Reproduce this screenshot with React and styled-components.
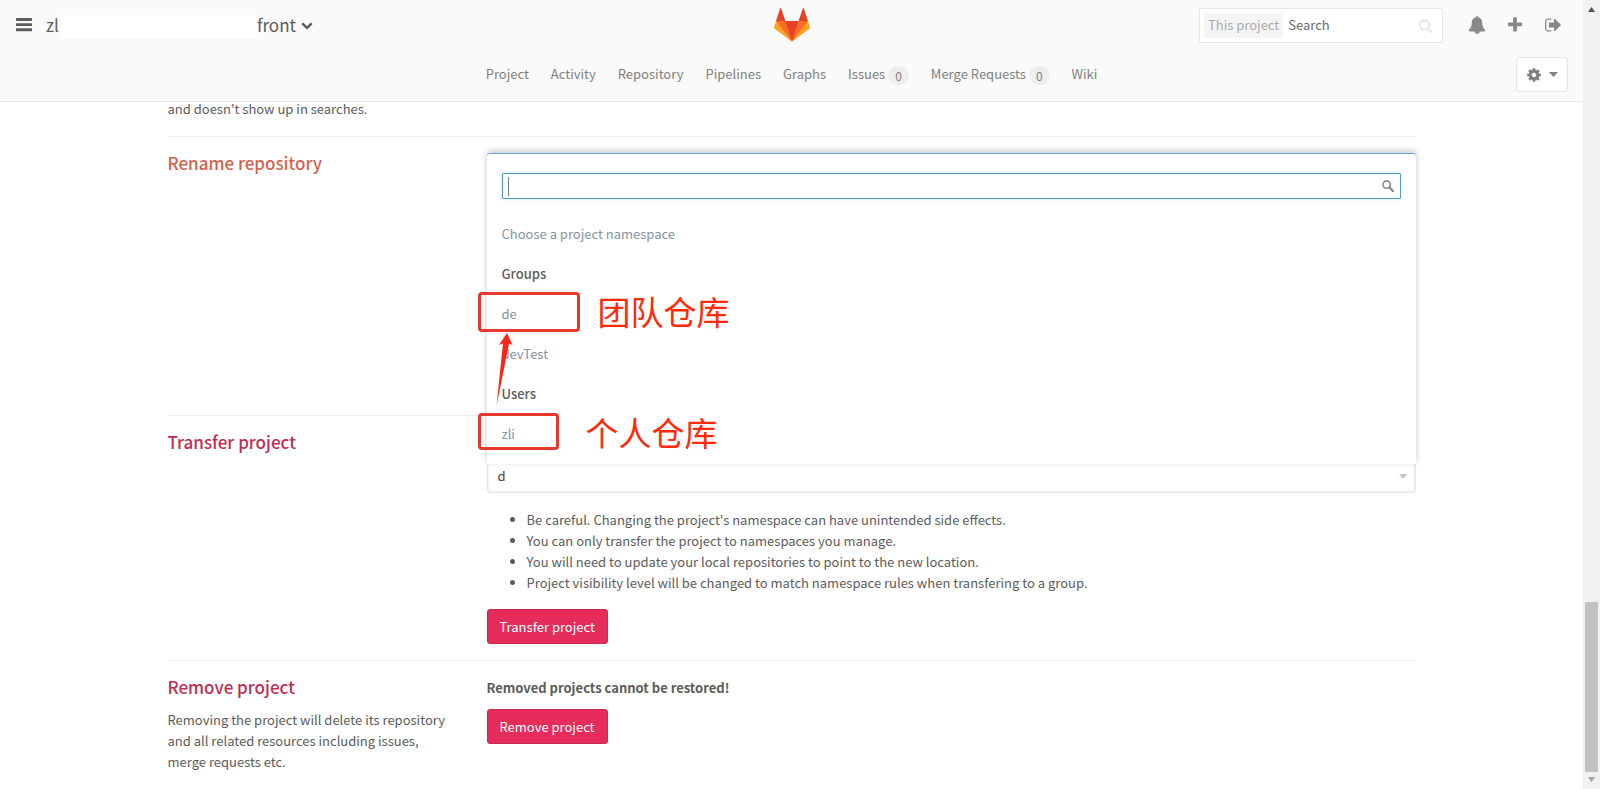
import React from "react";
import styled, { createGlobalStyle } from "styled-components";

const GlobalStyle = createGlobalStyle`
  *, *::before, *::after { box-sizing: border-box; }
  body {
    margin: 0;
    background: #fff;
    color: #5c5c5c;
    font-family: "Noto Sans CJK SC", "Open Sans", sans-serif;
    font-size: 13px;
    line-height: 21px;
  }
  button, input { font: inherit; color: inherit; }
  a { color: inherit; text-decoration: none; }
`;

/* ---------- icons ---------- */

const ICONS = {
  menu: "M64 112h1664q64 0 64 64v200q0 64-64 64h-1664q-64 0-64-64v-200q0-64 64-64zM64 692h1664q64 0 64 64v200q0 64-64 64h-1664q-64 0-64-64v-200q0-64 64-64zM64 1272h1664q64 0 64 64v200q0 64-64 64h-1664q-64 0-64-64v-200q0-64 64-64z",
  chevron:
    "M1683 808l-742 741q-19 19-45 19t-45-19l-742-741q-19-19-19-45.500t19-45.500l166-165q19-19 45-19t45 19l531 531 531-531q19-19 45-19t45 19l166 165q19 19 19 45.500t-19 45.500z",
  search:
    "M1216 832q0-185-131.500-316.500t-316.500-131.500-316.500 131.500-131.500 316.500 131.500 316.500 316.500 131.500 316.500-131.500 131.500-316.500zm512 832q0 52-38 90t-90 38q-54 0-90-38l-343-342q-179 124-399 124-143 0-273.500-55.500t-225-150-150-225-55.500-273.500 55.500-273.500 150-225 225-150 273.500-55.500 273.500 55.500 225 150 150 225 55.500 273.500q0 220-124 399l343 343q37 37 37 90z",
  bell: "M912 1696q0-16-16-16-59 0-101.500-42.500t-42.500-101.500q0-16-16-16t-16 16q0 73 51.500 124.500t124.500 51.500q16 0 16-16zm816-288q0 52-38 90t-90 38h-448q0 106-75 181t-181 75-181-75-75-181h-448q-52 0-90-38t-38-90q50-42 91-88t85-119.500 74.500-158.500 50-206 19.500-260q0-152 117-282.500t307-158.500q-8-19-8-39 0-40 28-68t68-28 68 28 28 68q0 20-8 39 190 28 307 158.500t117 282.500q0 139 19.500 260t50 206 74.500 158.500 85 119.500 91 88z",
  plus: "M1600 736v192q0 40-28 68t-68 28h-416v416q0 40-28 68t-68 28h-192q-40 0-68-28t-28-68v-416h-416q-40 0-68-28t-28-68v-192q0-40 28-68t68-28h416v-416q0-40 28-68t68-28h192q40 0 68 28t28 68v416h416q40 0 68 28t28 68z",
  signOut:
    "M640 1440q0 4 1 20t.5 26.500-3 23.500-10 19.500-20.500 6.500h-320q-119 0-203.500-84.500t-84.500-203.500v-704q0-119 84.500-203.500t203.500-84.500h320q13 0 22.500 9.500t9.500 22.500q0 4 1 20t.5 26.500-3 23.500-10 19.500-20.500 6.500h-320q-66 0-113 47t-47 113v704q0 66 47 113t113 47h312l11.500 1 11.500 3 8 5.500 7 9 2 13.500zm928-544q0 26-19 45l-544 544q-19 19-45 19t-45-19-19-45v-288h-448q-26 0-45-19t-19-45v-384q0-26 19-45t45-19h448v-288q0-26 19-45t45-19 45 19l544 544q19 19 19 45z",
  cog: "M1152 896q0-106-75-181t-181-75-181 75-75 181 75 181 181 75 181-75 75-181zm512-109v222q0 12-8 23t-20 13l-185 28q-19 54-39 91 35 50 107 138 10 12 10 25t-9 23q-27 37-99 108t-94 71q-12 0-26-9l-138-108q-44 23-91 38-16 136-29 186-7 28-36 28h-222q-14 0-24.500-8.500t-11.500-21.500l-28-184q-49-16-90-37l-141 107q-10 9-25 9-14 0-25-11-126-114-165-168-7-10-7-23 0-12 8-23 15-21 51-66.500t54-70.500q-27-50-41-99l-183-27q-13-2-21-12.500t-8-23.500v-222q0-12 8-23t19-13l186-28q14-46 39-92-40-57-107-138-10-12-10-24 0-10 9-23 26-36 98.500-107.500t94.500-71.500q13 0 26 10l138 107q44-23 91-38 16-136 29-186 7-28 36-28h222q14 0 24.500 8.500t11.500 21.500l28 184q49 16 90 37l142-107q9-9 24-9 13 0 25 10 129 119 165 170 7 8 7 22 0 12-8 23-15 21-51 66.500t-54 70.500q26 50 41 98l183 28q13 2 21 12.500t8 23.500z",
};

const Glyph = styled.svg`
  display: block;
  flex: none;
  fill: currentColor;
`;

const Icon = ({ name, size = 16 }) => (
  <Glyph width={size} height={size} viewBox="0 0 1792 1792" aria-hidden="true">
    <path d={ICONS[name]} />
  </Glyph>
);

const Magnifier = () => (
  <Glyph width="12" height="12" viewBox="0 0 12 12" aria-hidden="true">
    <circle cx="4.600" cy="4.600" r="3.700" fill="none" stroke="currentColor" strokeWidth="1.600" />
    <path d="M7.400 7.400L11 11" stroke="currentColor" strokeWidth="2.200" strokeLinecap="round" />
  </Glyph>
);

const Caret = ({ width = 9, up = false }) => (
  <Glyph width={width} height="5" viewBox="0 0 10 5" preserveAspectRatio="none" aria-hidden="true">
    <path d={up ? "M0 5L5 0L10 5Z" : "M0 0H10L5 5Z"} />
  </Glyph>
);

const Logo = () => (
  <Glyph width="36" height="36" viewBox="0 0 36 36" role="img" aria-label="GitLab">
    <path fill="#e24329" d="M2 14l9.380 9v-9l-4-12.280c-.205-.632-1.176-.632-1.380 0z" />
    <path fill="#e24329" d="M34 14l-9.380 9v-9l4-12.280c.205-.632 1.176-.632 1.380 0z" />
    <path fill="#e24329" d="M18 34.380L3 14h30z" />
    <path fill="#fc6d26" d="M18 34.380L11.380 14H2l4 11z" />
    <path fill="#fc6d26" d="M18 34.380L24.620 14H34l-4 11z" />
    <path fill="#fca326" d="M2 14L.1 20.160c-.18.565 0 1.200.5 1.560l17.420 12.660z" />
    <path fill="#fca326" d="M34 14l1.900 6.160c.18.565 0 1.200-.5 1.560L18 34.380z" />
  </Glyph>
);

/* ---------- frame ---------- */

const Frame = styled.div`
  display: flex;
  height: 100vh;
  overflow: hidden;
`;

const Page = styled.div`
  flex: 1;
  min-width: 0;
  overflow: hidden;
`;

const ScrollTrack = styled.div`
  display: flex;
  flex-direction: column;
  align-items: center;
  width: 17px;
  padding: 7px 0;
  background: #f1f1f1;
  color: #505050;
`;

const ScrollThumb = styled.div`
  width: 13px;
  flex: 0 0 22%;
  margin: auto 0 5px;
  background: #c1c1c1;
`;

const ScrollEnd = styled.div`
  color: #a3a3a3;
`;

/* ---------- header ---------- */

const Header = styled.header`
  background: #fafafa;
  border-bottom: 1px solid #e5e5e5;
  padding: 0 15px 2px;
`;

const TopBar = styled.div`
  display: grid;
  grid-template-columns: 1fr auto 1fr;
  align-items: center;
  height: 50px;
`;

const TopLeft = styled.div`
  display: flex;
  align-items: center;
  padding-left: 1px;
`;

const Actions = styled.div`
  display: flex;
  align-items: center;
  justify-content: flex-end;
  padding-right: 5px;
  color: #888;
`;

const IconButton = styled.button`
  display: flex;
  align-items: center;
  justify-content: center;
  border: 0;
  padding: 0;
  margin: 0 ${(p) => p.$gap || 0}px 0 0;
  background: none;
  color: inherit;
`;

const MenuButton = styled(IconButton)`
  color: #5c5c5c;
`;

const ProjectTitle = styled.button`
  display: flex;
  align-items: center;
  border: 0;
  padding: 0;
  margin-left: 14px;
  background: none;
  font-size: 17px;
  line-height: 24px;
`;

const Blank = styled.span`
  width: 196px;
  height: 23px;
  margin: 2px 0 0 2px;
  background: #fff;
`;

const TitleEnd = styled.span`
  margin-right: 5px;
`;

const SearchForm = styled.form`
  display: flex;
  align-items: center;
  width: 244px;
  height: 35px;
  margin-right: 25px;
  padding: 0 9px 0 4px;
  border: 1px solid #e5e5e5;
  border-radius: 2px;
  background: #fff;
  color: #e7e9ed;
`;

const SearchScope = styled.span`
  padding: 1px 4px 3px;
  border-radius: 2px;
  background: #f5f5f5;
  color: #aaa;
  white-space: nowrap;
`;

const SearchInput = styled.input`
  flex: 1;
  min-width: 0;
  border: 0;
  outline: 0;
  padding: 0 5px 2px;
  background: none;
  color: #5c5c5c;
  &::placeholder { color: #6a6a6a; opacity: 1; }
`;

const NavBar = styled.div`
  display: grid;
  grid-template-columns: 1fr auto 1fr;
  align-items: center;
  height: 49px;
`;

const Nav = styled.nav`
  grid-column: 2;
  display: flex;
  gap: 22px;
  padding-bottom: 2px;
  color: #7f7f7f;
`;

const NavLink = styled.a`
  display: flex;
  align-items: center;
  white-space: nowrap;
`;

const Count = styled.span`
  margin: 3px 0 0 3px;
  padding: 0 7px;
  border-radius: 10px;
  background: #eee;
  font-size: 12px;
  line-height: 19px;
`;

const SettingsButton = styled.button`
  justify-self: end;
  display: flex;
  align-items: center;
  justify-content: center;
  gap: 7px;
  width: 52px;
  height: 35px;
  border: 1px solid #e5e5e5;
  border-radius: 3px;
  background: #fff;
  color: #7f7f7f;
`;

/* ---------- settings sections ---------- */

const Content = styled.main`
  max-width: 1280px;
  margin: 0 auto;
  padding: 0 16px;
`;

const Intro = styled.p`
  margin: 0;
  padding-bottom: 20px;
  line-height: 14px;
`;

const Section = styled.section`
  display: grid;
  grid-template-columns: 289px 1fr;
  column-gap: 30px;
  min-height: ${(p) => p.$min || 0}px;
  padding: 16px 0;
  border-top: 1px solid #eee;
`;

const SectionTitle = styled.h4`
  margin: 0 0 12px;
  font-size: 17px;
  line-height: 20px;
  font-weight: 500;
  color: ${(p) => (p.$tone === "warning" ? "#d4634c" : "#be2e52")};
`;

const Description = styled.p`
  margin: 0;
`;

const DangerButton = styled.button`
  display: block;
  height: 35px;
  padding: 0 12px;
  border: 1px solid #c9284f;
  border-radius: 3px;
  background: #e52c5a;
  color: #fff;
`;

const Warning = styled.strong`
  display: block;
  margin-bottom: 11px;
  font-weight: 700;
`;

const Notes = styled.ul`
  margin: 16px 0;
  padding-left: 40px;
`;

/* ---------- namespace select ---------- */

const Field = styled.div`
  position: relative;
  margin-top: 27px;
`;

const SelectBox = styled.button`
  display: flex;
  align-items: center;
  justify-content: space-between;
  width: 100%;
  height: 34px;
  padding: 0 8px 0 10px;
  border: 1px solid #e5e5e5;
  border-radius: 3px;
  background: #fff;
  box-shadow: inset 0 0 3px rgba(0, 0, 0, 0.12);
  color: #c4c4c4;
`;

const SelectValue = styled.span`
  padding-bottom: 2px;
  color: #444;
`;

const Dropdown = styled.div`
  position: absolute;
  left: 0;
  right: 0;
  bottom: 29px;
  padding: 19px 15px 10px;
  border-top: 1px solid #6f9fd8;
  border-radius: 3px 3px 0 0;
  background: #fff;
  box-shadow: 0 -2px 6px rgba(0, 0, 0, 0.22);
`;

const FilterBox = styled.label`
  display: flex;
  align-items: center;
  height: 26px;
  margin-bottom: 15px;
  padding: 0 6px 0 5px;
  border: 1px solid #4f9cc8;
  border-radius: 1px;
  box-shadow: 0 0 3px rgba(82, 168, 236, 0.35);
  color: #888;
`;

const TextCursor = styled.span`
  width: 1px;
  height: 19px;
  background: #777;
`;

const FilterInput = styled.input`
  flex: 1;
  min-width: 0;
  border: 0;
  outline: 0;
  padding: 0;
  background: none;
`;

const OptionList = styled.ul`
  list-style: none;
  margin: 0;
  padding: 0;
`;

const Option = styled.li`
  line-height: 40px;
  color: ${(p) => (p.$heading ? "#5c5c5c" : "#8492a6")};
  font-weight: ${(p) => (p.$heading ? 500 : 400)};
`;

/* ---------- red marks drawn over the dropdown ---------- */

const MarkBox = styled.div`
  position: absolute;
  left: -9px;
  top: ${(p) => p.$top}px;
  width: ${(p) => p.$width}px;
  height: ${(p) => p.$height}px;
  border: 3px solid #e8382d;
  border-radius: 4px;
`;

const MarkText = styled.span`
  position: absolute;
  left: ${(p) => p.$left}px;
  top: ${(p) => p.$top}px;
  color: #ff2a0a;
  font-size: 33px;
  line-height: 40px;
  white-space: nowrap;
`;

const MarkArrow = styled.svg`
  position: absolute;
  left: 8px;
  top: 179px;
`;

const LINKS = [
  ["Project"],
  ["Activity"],
  ["Repository"],
  ["Pipelines"],
  ["Graphs"],
  ["Issues", 0],
  ["Merge Requests", 0],
  ["Wiki"],
];

const OPTIONS = [
  { text: "Choose a project namespace" },
  { text: "Groups", heading: true },
  { text: "de" },
  { text: "devTest" },
  { text: "Users", heading: true },
  { text: "zli" },
];

const NOTES = [
  "Be careful. Changing the project's namespace can have unintended side effects.",
  "You can only transfer the project to namespaces you manage.",
  "You will need to update your local repositories to point to the new location.",
  "Project visibility level will be changed to match namespace rules when transfering to a group.",
];

export default function App() {
  return (
    <Frame>
      <GlobalStyle />
      <Page>
        <Header>
          <TopBar>
            <TopLeft>
              <MenuButton aria-label="Toggle navigation">
                <Icon name="menu" />
              </MenuButton>
              <ProjectTitle>
                <span>zl</span>
                <Blank />
                <TitleEnd>front</TitleEnd>
                <Icon name="chevron" size={12} />
              </ProjectTitle>
            </TopLeft>
            <Logo />
            <Actions>
              <SearchForm>
                <SearchScope>This project</SearchScope>
                <SearchInput aria-label="Search" placeholder="Search" />
                <Icon name="search" size={15} />
              </SearchForm>
              <IconButton aria-label="Todos" $gap={20}>
                <Icon name="bell" size={18} />
              </IconButton>
              <IconButton aria-label="New project" $gap={21}>
                <Icon name="plus" size={18} />
              </IconButton>
              <IconButton aria-label="Sign out">
                <Icon name="signOut" size={18} />
              </IconButton>
            </Actions>
          </TopBar>
          <NavBar>
            <Nav>
              {LINKS.map(([label, count]) => (
                <NavLink href="#" key={label}>
                  {label}
                  {count !== undefined && <Count>{count}</Count>}
                </NavLink>
              ))}
            </Nav>
            <SettingsButton aria-label="Settings">
              <Icon name="cog" />
              <Caret />
            </SettingsButton>
          </NavBar>
        </Header>

        <Content>
          <Intro>and doesn't show up in searches.</Intro>

          <Section $min={279}>
            <SectionTitle $tone="warning">Rename repository</SectionTitle>
          </Section>

          <Section>
            <SectionTitle>Transfer project</SectionTitle>
            <div>
              <Field>
                <SelectBox aria-label="Namespace">
                  <SelectValue>d</SelectValue>
                  <Caret width={8} />
                </SelectBox>
                <Dropdown>
                  <FilterBox>
                    <TextCursor />
                    <FilterInput aria-label="Filter namespaces" />
                    <Magnifier />
                  </FilterBox>
                  <OptionList>
                    {OPTIONS.map((o) => (
                      <Option key={o.text} $heading={o.heading}>
                        {o.text}
                      </Option>
                    ))}
                  </OptionList>
                  <MarkBox $top={138} $width={102} $height={40} />
                  <MarkText $left={111} $top={137}>团队仓库</MarkText>
                  <MarkArrow width="20" height="74" viewBox="0 0 20 74" aria-hidden="true">
                    <path fill="#fa2416" d="M12 0L17.500 12L14 10.500L1.500 73L8 10.500L4 12Z" />
                  </MarkArrow>
                  <MarkBox $top={259} $width={81} $height={37} />
                  <MarkText $left={99} $top={258}>个人仓库</MarkText>
                </Dropdown>
              </Field>
              <Notes>
                {NOTES.map((n) => (
                  <li key={n}>{n}</li>
                ))}
              </Notes>
              <DangerButton>Transfer project</DangerButton>
            </div>
          </Section>

          <Section>
            <div>
              <SectionTitle>Remove project</SectionTitle>
              <Description>
                Removing the project will delete its repository and all related
                resources including issues, merge requests etc.
              </Description>
            </div>
            <div>
              <Warning>Removed projects cannot be restored!</Warning>
              <DangerButton>Remove project</DangerButton>
            </div>
          </Section>
        </Content>
      </Page>
      <ScrollTrack aria-hidden="true">
        <Caret width={7} up />
        <ScrollThumb />
        <ScrollEnd>
          <Caret width={7} />
        </ScrollEnd>
      </ScrollTrack>
    </Frame>
  );
}
